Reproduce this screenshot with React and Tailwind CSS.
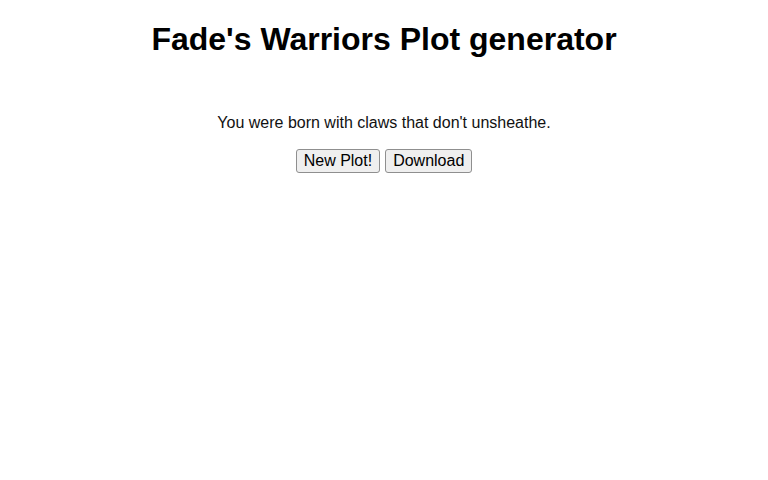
export default function App() {
  return (
    <div className="text-center text-black bg-white min-h-[480px]" style={{ fontFamily: '"Liberation Sans", Arial, sans-serif' }}>
      <h1 className="text-[32px] font-bold leading-[37px] pt-[21px] mb-[21px]">Fade's Warriors Plot generator</h1>
      <div className="h-[19px]"></div>
      <p className="text-[16px] leading-[18px] text-[#111] mt-[16px] mb-[17px]">You were born with claws that don't unsheathe.</p>
      <div className="flex justify-center gap-[5px]">
        <button className="text-[16px] leading-[18px] px-[7px] py-[2px] bg-[#efefef] border border-[#8f8f8f] rounded-[3px] text-black">New Plot!</button>
        <button className="text-[16px] leading-[18px] px-[7px] py-[2px] bg-[#efefef] border border-[#8f8f8f] rounded-[3px] text-black">Download</button>
      </div>
    </div>
  );
}
